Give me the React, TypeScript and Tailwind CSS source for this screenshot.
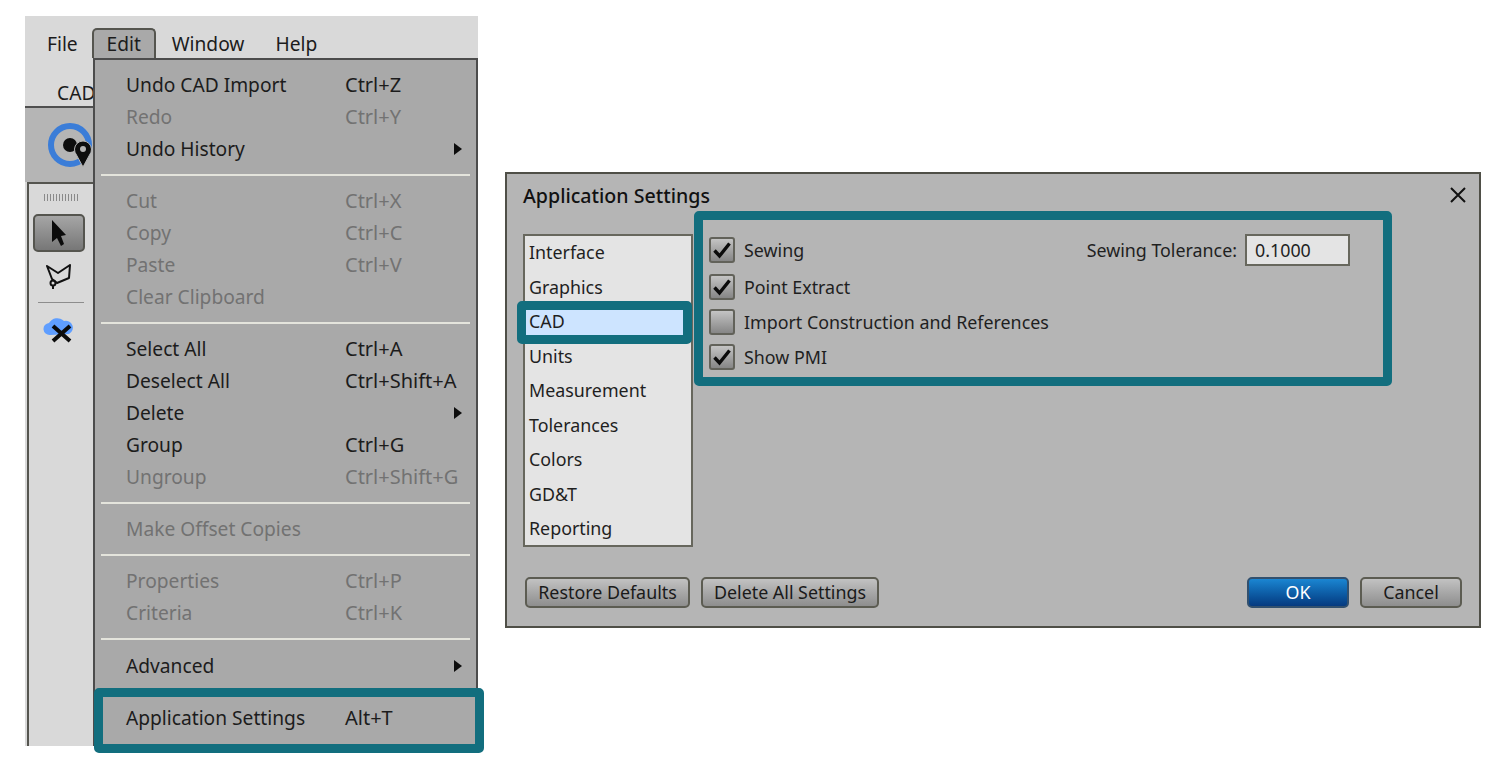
import React from "react";

type MenuRow = { label?: string; keys?: string; off?: boolean; sub?: boolean; line?: boolean };

const menuRows: MenuRow[] = [
  { label: "Undo CAD Import", keys: "Ctrl+Z" },
  { label: "Redo", keys: "Ctrl+Y", off: true },
  { label: "Undo History", sub: true },
  { line: true },
  { label: "Cut", keys: "Ctrl+X", off: true },
  { label: "Copy", keys: "Ctrl+C", off: true },
  { label: "Paste", keys: "Ctrl+V", off: true },
  { label: "Clear Clipboard", off: true },
  { line: true },
  { label: "Select All", keys: "Ctrl+A" },
  { label: "Deselect All", keys: "Ctrl+Shift+A" },
  { label: "Delete", sub: true },
  { label: "Group", keys: "Ctrl+G" },
  { label: "Ungroup", keys: "Ctrl+Shift+G", off: true },
  { line: true },
  { label: "Make Offset Copies", off: true },
  { line: true },
  { label: "Properties", keys: "Ctrl+P", off: true },
  { label: "Criteria", keys: "Ctrl+K", off: true },
  { line: true },
  { label: "Advanced", sub: true },
  { line: true },
  { label: "Application Settings", keys: "Alt+T" },
];

const settingsPages = ["Interface", "Graphics", "CAD", "Units", "Measurement", "Tolerances", "Colors", "GD&T", "Reporting"];

const Highlight = ({ className }: { className: string }) => (
  <div className={`absolute border-[9px] border-[#126e7e] rounded-[5px] pointer-events-none ${className}`} />
);

const Check = ({ on, className }: { on: boolean; className?: string }) => (
  <div className={`w-[26px] h-[26px] rounded-[3px] border-2 border-[#62625a] bg-gradient-to-b from-[#c4c4c4] to-[#868686] flex items-center justify-center shrink-0 ${className ?? ""}`}>
    {on && (
      <svg width="20" height="18" viewBox="0 0 20 18">
        <path d="M2.5 9.5 L7.5 15 L17.5 2.5" fill="none" stroke="#0b0b0b" strokeWidth="3.4" />
      </svg>
    )}
  </div>
);

const Btn = ({ children, className }: { children: React.ReactNode; className: string }) => (
  <button className={`h-[31px] pt-px rounded-[5px] border-2 text-[17.85px] leading-none flex items-center justify-center ${className}`}>
    {children}
  </button>
);

const greyBtn = "border-[#5c5c52] bg-gradient-to-b from-[#c2c2c2] to-[#8e8e8e] text-[#1a1a1a]";

const Arrow = () => (
  <svg width="8" height="12" viewBox="0 0 8 12" className="absolute left-[359px]">
    <polygon points="0,0 8,6 0,12" fill="#0d0d0d" />
  </svg>
);

const EditMenu = () => (
  <div className="absolute left-[68px] top-[42px] w-[385px] h-[688px] bg-[#a9a9a9] border-2 border-[#4c4c4c] pt-[9px] z-10">
    {menuRows.map((row, i) =>
      row.line ? (
        <div key={i} className="h-[20px] flex items-center px-[6px]">
          <div className="w-full h-[2px] bg-[#e4e4dc]" />
        </div>
      ) : (
        <div
          key={i}
          className={`relative h-[32px] flex items-center pl-[31px] ${row.label === "Advanced" ? "mt-px" : ""} ${row.off ? "text-[#727272]" : "text-[#1c1c1c]"}`}
        >
          <span className="w-[219px] text-[19.2px]">{row.label}</span>
          <span className="text-[20px]">{row.keys}</span>
          {row.sub && <Arrow />}
        </div>
      )
    )}
  </div>
);

const LeftPanel = () => (
  <div className="relative w-[453px] h-[730px] ml-[25px] mt-[16px] shrink-0 bg-[#d9d9d9] flex flex-col text-[19.2px] text-[#1c1c1c]">
    <div className="h-[42px] pt-[14px] flex items-center shrink-0">
      <span className="ml-[22px]">File</span>
      <div className="self-end ml-[14px] w-[64px] h-[30px] pt-[1px] border-2 border-b-0 border-[#55554f] rounded-t-[5px] bg-[#a9a9a9] flex items-center justify-center">
        Edit
      </div>
      <span className="ml-[16px]">Window</span>
      <span className="ml-[31px]">Help</span>
    </div>
    <div className="h-[50px] border-b-2 border-[#4f4f4f] pl-[32px] pt-[20px] shrink-0 leading-[30px]">CAD</div>
    <div className="h-[74px] bg-[#b5b5b5] pl-[23px] flex items-center shrink-0">
      <svg width="50" height="50" viewBox="0 0 50 50" className="overflow-visible">
        <circle cx="22" cy="25" r="19" fill="#b5b5b5" stroke="#3b7dd8" strokeWidth="6" />
        <circle cx="22" cy="25" r="7" fill="#0e0e0e" />
        <path d="M35 47 L28.5 35 A8.5 8.5 0 1 1 41.5 35 Z" fill="#0e0e0e" stroke="#b5b5b5" strokeWidth="1" />
        <circle cx="35" cy="29" r="3" fill="#b5b5b5" />
      </svg>
    </div>
    <div className="flex-1 flex pl-[2px]">
      <div className="w-[68px] border-l-2 border-t-2 border-[#55554f] flex flex-col items-center pr-[6px]">
        <div className="mt-[10px] w-[36px] h-[7px] ml-[6px] bg-[repeating-linear-gradient(90deg,#8a8a8a_0,#8a8a8a_1px,transparent_1px,transparent_3px)]" />
        <div className="mt-[13px] w-[52px] h-[38px] rounded-[5px] border-2 border-[#55554f] bg-gradient-to-b from-[#a6a6a6] to-[#777] flex items-center justify-center">
          <svg width="20" height="28" viewBox="0 0 20 28">
            <path d="M3 1 L17 16 L12 17 L15 25 L12 27 L8 19 L3 23 Z" fill="#0b0b0b" />
          </svg>
        </div>
        <svg width="26" height="26" viewBox="0 0 26 26" className="mt-[12px]">
          <path d="M1 2 L12 9 L24 1 L23 14 L11 19 L6 15 Z" fill="none" stroke="#111" strokeWidth="2" strokeLinejoin="round" />
          <circle cx="7" cy="19" r="2.5" fill="none" stroke="#111" strokeWidth="2" />
          <path d="M7 21 L7 25" stroke="#111" strokeWidth="2" />
        </svg>
        <div className="mt-[12px] ml-[4px] w-[46px] h-[1px] bg-[#8d8d8d]" />
        <svg width="32" height="28" viewBox="0 0 32 28" className="mt-[12px]">
          <path d="M7 20 A6 6 0 0 1 6 8 A9 8 0 0 1 21 6 A7 7 0 0 1 26 19 Z" fill="#5f9eff" />
          <path d="M10 11 L27 26 M27 11 L10 26" stroke="#0b0b0b" strokeWidth="4" />
        </svg>
      </div>
    </div>
    <EditMenu />
    <Highlight className="left-[69px] top-[672px] w-[390px] h-[65px] z-20" />
  </div>
);

const SettingsDialog = () => (
  <div className="relative w-[976px] h-[456px] ml-[27px] mt-[172px] shrink-0 bg-[#b5b5b5] border-2 border-[#4f4f47] text-[17.85px] text-[#1f1f1f] flex flex-col pl-[16px] pr-[17px]">
    <div className="h-[60px] shrink-0 flex items-start justify-between">
      <span className="mt-[7px] text-[19.6px] font-medium text-[#111]">Application Settings</span>
      <svg width="18" height="18" viewBox="0 0 18 18" className="mt-[12px] mr-[-5px]">
        <path d="M2 2 L16 16 M16 2 L2 16" stroke="#111" strokeWidth="2" />
      </svg>
    </div>
    <div className="flex flex-1 items-start">
      <div className="w-[170px] h-[313px] border-2 border-[#67675d] bg-[#e4e4e4] flex flex-col overflow-hidden">
        {settingsPages.map((p) => (
          <div
            key={p}
            className={`h-[34.5px] pb-[1px] shrink-0 flex items-center pl-[4px] ${p === "CAD" ? "bg-[#cde4ff]" : ""}`}
          >
            {p}
          </div>
        ))}
      </div>
      <div className="ml-[16px] flex-1 pr-[112px]">
        <div className="flex items-center h-[32px]">
          <Check on />
          <span className="ml-[9px]">Sewing</span>
          <span className="ml-auto">Sewing Tolerance:</span>
          <div className="ml-[8px] w-[105px] h-[32px] border-2 border-[#67675d] bg-[#e4e4e4] pl-[8px] flex items-center">0.1000</div>
        </div>
        {[
          { t: "Point Extract", on: true },
          { t: "Import Construction and References", on: false },
          { t: "Show PMI", on: true },
        ].map((o, i) => (
          <div key={o.t} className={`flex items-center h-[26px] ${i === 0 ? "mt-[8px]" : "mt-[9px]"}`}>
            <Check on={o.on} />
            <span className="ml-[9px]">{o.t}</span>
          </div>
        ))}
      </div>
    </div>
    <div className="flex items-center h-[31px] mb-[18px] shrink-0 pl-[2px]">
      <Btn className={`w-[165px] ${greyBtn}`}>Restore Defaults</Btn>
      <Btn className={`w-[178px] ml-[11px] ${greyBtn}`}>Delete All Settings</Btn>
      <Btn className="w-[102px] ml-auto border-[#32506e] bg-gradient-to-b from-[#1b86d2] to-[#063a80] text-white">OK</Btn>
      <Btn className={`w-[102px] ml-[11px] ${greyBtn}`}>Cancel</Btn>
    </div>
    <Highlight className="left-[10px] top-[127px] w-[175px] h-[43px]" />
    <Highlight className="left-[187px] top-[37px] w-[698px] h-[175px]" />
  </div>
);

export default function App() {
  return (
    <div className="w-[1505px] h-[768px] bg-white flex items-start overflow-hidden font-['Noto_Sans','Open_Sans',sans-serif]">
      <LeftPanel />
      <SettingsDialog />
    </div>
  );
}
